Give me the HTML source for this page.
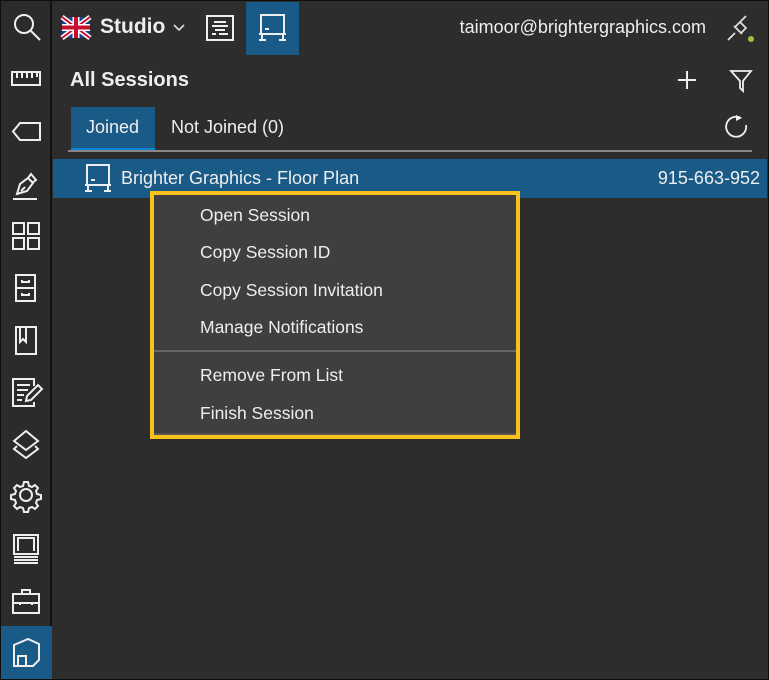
<!DOCTYPE html>
<html><head><meta charset="utf-8"><style>
*{margin:0;padding:0;box-sizing:border-box}
body{width:769px;height:680px;background:#2d2d2d;font-family:"Liberation Sans",Roboto,sans-serif;color:#eee;position:relative;overflow:hidden}
.frame{position:absolute;inset:0;border:1px solid #0e0e0e;pointer-events:none;z-index:9}
.side{position:absolute;left:0;top:0;width:52px;height:680px;background:#2b2b2b;border-right:2px solid #111}
.ic{position:absolute;left:8px;width:36px;height:36px}
svg{overflow:visible}
.t{position:absolute;white-space:nowrap}
.menu{position:absolute;left:150px;top:191px;width:370px;height:248px;border:4px solid #f8c21a;background:#3f3f3f}
.mi{position:absolute;left:46px;font-size:17.5px;color:#eee}
</style></head><body>
<div class="frame"></div>
<div class="side">
<svg class="ic" style="top:9px" viewBox="0 0 36 36" fill="none" stroke="#eee" stroke-width="2"><circle cx="16" cy="15" r="9"/><path d="M23 22l9 9"/></svg>
<svg class="ic" style="top:60px" viewBox="0 0 36 36" fill="none" stroke="#eee" stroke-width="2"><rect x="4" y="12" width="28" height="13"/><path d="M9 12v6M14 12v6M19 12v6M24 12v6M29 12v5"/></svg>
<svg class="ic" style="top:113px" viewBox="0 0 36 36" fill="none" stroke="#eee" stroke-width="2"><path d="M12 10h20v17H12L5 18.5z"/></svg>
<svg class="ic" style="top:166px" viewBox="0 0 36 36" fill="none" stroke="#eee" stroke-width="2"><path d="M5 33h24M9 28l3-10 8-6 5 5-6 8z M20 12l3-4 5 6-4 3 M13 25l4-4"/></svg>
<svg class="ic" style="top:218px" viewBox="0 0 36 36" fill="none" stroke="#eee" stroke-width="2"><rect x="5" y="5" width="11" height="11"/><rect x="20" y="5" width="11" height="11"/><rect x="5" y="20" width="11" height="11"/><rect x="20" y="20" width="11" height="11"/></svg>
<svg class="ic" style="top:270px" viewBox="0 0 36 36" fill="none" stroke="#eee" stroke-width="2"><rect x="8" y="5" width="19" height="26"/><path d="M8 18h19M14 10v2h7v-2M14 23v2h7v-2"/></svg>
<svg class="ic" style="top:322px" viewBox="0 0 36 36" fill="none" stroke="#eee" stroke-width="2"><rect x="8" y="5" width="20" height="27"/><path d="M12 5v15l3-3 3 3V5"/></svg>
<svg class="ic" style="top:374px" viewBox="0 0 36 36" fill="none" stroke="#eee" stroke-width="2"><path d="M26 12V5H5v27h21v-4M9 11h13M9 16h11M9 21h7M9 26h5M18 27l1-5 11-11 4 4-11 11z"/></svg>
<svg class="ic" style="top:426px" viewBox="0 0 36 36" fill="none" stroke="#eee" stroke-width="2"><path d="M18 5l12 10-12 9L6 15z M9 20l-3 3 12 9 12-9-3-3"/></svg>
<svg class="ic" style="top:477px" viewBox="0 0 36 36" fill="none" stroke="#eee" stroke-width="2"><circle cx="18" cy="18" r="6"/><path d="M16 5h4l1 4 3 1 3-2 3 3-2 3 1 3 4 1v4l-4 1-1 3 2 3-3 3-3-2-3 1-1 4h-4l-1-4-3-1-3 2-3-3 2-3-1-3-4-1v-4l4-1 1-3-2-3 3-3 3 2 3-1z"/></svg>
<svg class="ic" style="top:530px" viewBox="0 0 36 36" fill="none" stroke="#eee" stroke-width="2"><path d="M6 24V5h24v19zM10 21V8h16v13M6 27h24M6 30h24M6 33h24"/></svg>
<svg class="ic" style="top:582px" viewBox="0 0 36 36" fill="none" stroke="#eee" stroke-width="2"><rect x="5" y="12" width="26" height="19"/><path d="M14 12V8h8v4M5 21h26M12 20v3M24 20v3"/></svg>
<div style="position:absolute;left:0;top:626px;width:52px;height:54px;background:#1a5a87"></div>
<svg class="ic" style="top:634px" viewBox="0 0 36 36" fill="none" stroke="#eee" stroke-width="2"><path d="M6 11l14-6 11 5v16l-6 6H6z M10 31v-9h8v9"/></svg>
</div>

<svg style="position:absolute;left:62px;top:17px" width="28" height="21" viewBox="0 0 28 21"><rect width="28" height="21" fill="#1f3d8a"/><path d="M0 0L28 21M28 0L0 21" stroke="#fff" stroke-width="5"/><path d="M0 0L28 21M28 0L0 21" stroke="#c8102e" stroke-width="2"/><path d="M14 0v21M0 10.5h28" stroke="#fff" stroke-width="7"/><path d="M14 0v21M0 10.5h28" stroke="#c8102e" stroke-width="4"/></svg>
<div class="t" style="left:100px;top:15px;font-size:21px;font-weight:bold">Studio</div>
<svg style="position:absolute;left:172px;top:22px" width="14" height="10" fill="none" stroke="#ddd" stroke-width="1.6"><path d="M2 3l5 5 5-5"/></svg>
<svg style="position:absolute;left:206px;top:15px" width="28" height="26" fill="none" stroke="#eee" stroke-width="2"><rect x="1" y="1" width="26" height="24"/><path d="M8 7h12M6 11h16M9 15h10M6 19h4M13 19h9"/></svg>
<div style="position:absolute;left:246px;top:2px;width:53px;height:53px;background:#1a5a87"></div>
<svg style="position:absolute;left:258px;top:14px" width="30" height="28" fill="none" stroke="#eee" stroke-width="2"><rect x="3" y="1" width="23" height="19"/><path d="M1 20h27M1 26h7M21 26h7M4 20v7M25 20v7M7 15h4"/></svg>
<div class="t" style="right:63px;top:17px;font-size:18px">taimoor@brightergraphics.com</div>
<svg style="position:absolute;left:726px;top:14px" width="32" height="30" fill="none" stroke="#ddd" stroke-width="1.8"><path d="M2 26l7-7M13 9l7-7M9 13l5-5 6 6-5 5z M8 12l8 8"/><circle cx="25" cy="25" r="3" fill="#9bc53d" stroke="none"/></svg>

<div class="t" style="left:70px;top:69px;font-size:20px;font-weight:bold">All Sessions</div>
<svg style="position:absolute;left:678px;top:71px" width="18" height="18" stroke="#eee" stroke-width="2"><path d="M9 0v18M0 9h18"/></svg>
<svg style="position:absolute;left:730px;top:70px" width="22" height="22" fill="none" stroke="#eee" stroke-width="1.8"><path d="M1 1h20l-8 10v10l-3-3v-7z"/></svg>

<div style="position:absolute;left:71px;top:107px;width:84px;height:44px;background:#1a5a87;border-bottom:3px solid #0a84d6"></div>
<div class="t" style="left:86px;top:117px;font-size:18px">Joined</div>
<div class="t" style="left:171px;top:117px;font-size:18px">Not Joined (0)</div>
<svg style="position:absolute;left:724px;top:114px" width="26" height="26" fill="none" stroke="#eee" stroke-width="1.8"><path d="M17 4A10 10 0 1 0 22 11"/><path d="M12 1l6 3-6 3z" fill="#eee" stroke="none"/></svg>
<div style="position:absolute;left:68px;top:150px;width:684px;height:2px;background:#888"></div>

<div style="position:absolute;left:53px;top:159px;width:714px;height:39px;background:#1a5a87"></div>
<svg style="position:absolute;left:84px;top:164px" width="28" height="28" fill="none" stroke="#eee" stroke-width="2"><rect x="3" y="1" width="22" height="20"/><path d="M1 21h26M1 27h7M20 27h7M4 21v7M24 21v7M7 16h4"/></svg>
<div class="t" style="left:121px;top:168px;font-size:18px">Brighter Graphics - Floor Plan</div>
<div class="t" style="right:9px;top:168px;font-size:18px">915-663-952</div>

<div class="menu">
<div class="mi" style="top:10px">Open Session</div>
<div class="mi" style="top:47px">Copy Session ID</div>
<div class="mi" style="top:85px">Copy Session Invitation</div>
<div class="mi" style="top:122px">Manage Notifications</div>
<div style="position:absolute;left:0;right:0;top:155px;height:2px;background:#666"></div>
<div class="mi" style="top:170px">Remove From List</div>
<div class="mi" style="top:208px">Finish Session</div>
<div style="position:absolute;left:0;right:0;bottom:0;height:2px;background:#555"></div>
</div>
</body></html>
